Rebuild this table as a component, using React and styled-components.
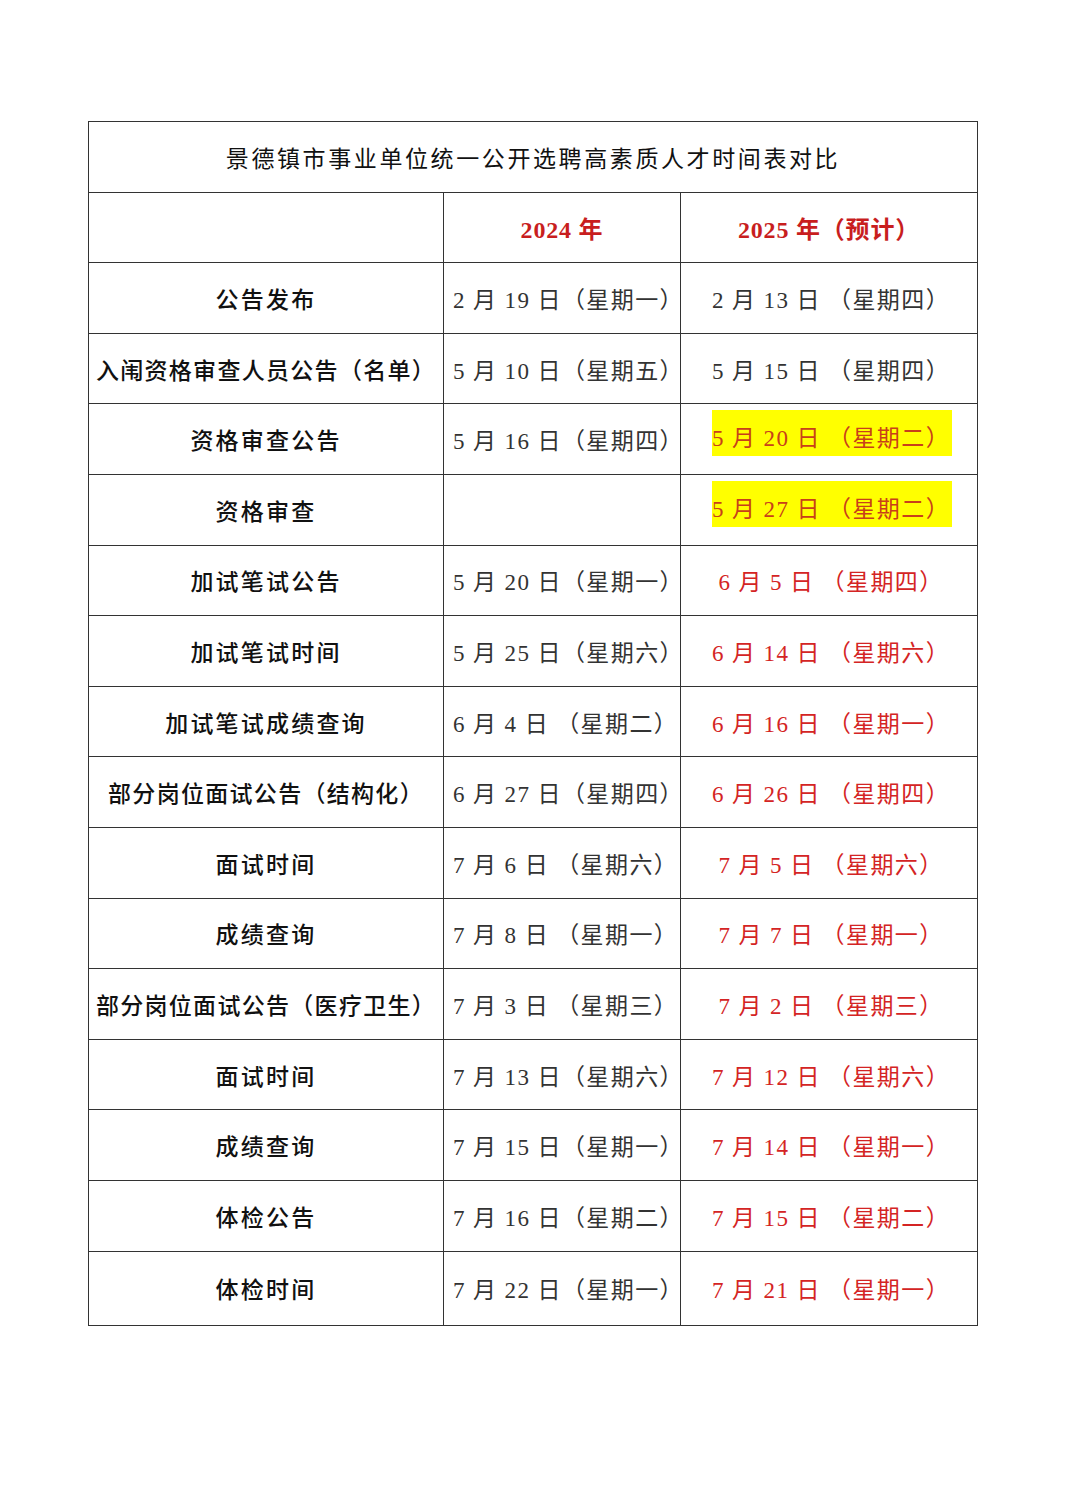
import { createGlobalStyle, styled } from "styled-components";

const GlobalStyle = createGlobalStyle`
  html, body {
    margin: 0;
    padding: 0;
    background: #ffffff;
  }
  body {
    font-family: "Liberation Serif", "Noto Sans CJK SC", serif;
  }
`;

const rows = [
  { label: "公告发布", y2024: "2 月 19 日（星期一）", y2025: "2 月 13 日 （星期四）", red: false },
  { label: "入闱资格审查人员公告（名单）", y2024: "5 月 10 日（星期五）", y2025: "5 月 15 日 （星期四）", red: false },
  { label: "资格审查公告", y2024: "5 月 16 日（星期四）", y2025: "5 月 20 日 （星期二）", mark: true },
  { label: "资格审查", y2024: "", y2025: "5 月 27 日 （星期二）", mark: true },
  { label: "加试笔试公告", y2024: "5 月 20 日（星期一）", y2025: "6 月 5 日 （星期四）", red: true },
  { label: "加试笔试时间", y2024: "5 月 25 日（星期六）", y2025: "6 月 14 日 （星期六）", red: true },
  { label: "加试笔试成绩查询", y2024: "6 月 4 日 （星期二）", y2025: "6 月 16 日 （星期一）", red: true },
  { label: "部分岗位面试公告（结构化）", y2024: "6 月 27 日（星期四）", y2025: "6 月 26 日 （星期四）", red: true },
  { label: "面试时间", y2024: "7 月 6 日 （星期六）", y2025: "7 月 5 日 （星期六）", red: true },
  { label: "成绩查询", y2024: "7 月 8 日 （星期一）", y2025: "7 月 7 日 （星期一）", red: true },
  { label: "部分岗位面试公告（医疗卫生）", y2024: "7 月 3 日 （星期三）", y2025: "7 月 2 日 （星期三）", red: true },
  { label: "面试时间", y2024: "7 月 13 日（星期六）", y2025: "7 月 12 日 （星期六）", red: true },
  { label: "成绩查询", y2024: "7 月 15 日（星期一）", y2025: "7 月 14 日 （星期一）", red: true },
  { label: "体检公告", y2024: "7 月 16 日（星期二）", y2025: "7 月 15 日 （星期二）", red: true },
  { label: "体检时间", y2024: "7 月 22 日（星期一）", y2025: "7 月 21 日 （星期一）", red: true },
];

export default function App() {
  return (
    <>
      <GlobalStyle />
      <Page>
        <Table>
          <colgroup>
            <col style={{ width: 355 }} />
            <col style={{ width: 237 }} />
            <col style={{ width: 297 }} />
          </colgroup>
          <tbody>
            <Row>
              <TitleCell colSpan={3}>景德镇市事业单位统一公开选聘高素质人才时间表对比</TitleCell>
            </Row>
            <Row>
              <Cell />
              <HeadCell>2024 年</HeadCell>
              <HeadCell>2025 年（预计）</HeadCell>
            </Row>
            {rows.map((r, i) => (
              <Row key={i} $last={i === rows.length - 1}>
                <LabelCell $tight={r.label.length > 12}>{r.label}</LabelCell>
                <DateCell>{r.y2024}</DateCell>
                <DateCell $center>
                  {r.mark ? <Mark>{r.y2025}</Mark> : <DateText $red={r.red}>{r.y2025}</DateText>}
                </DateCell>
              </Row>
            ))}
          </tbody>
        </Table>
      </Page>
    </>
  );
}

const Page = styled.div`
  padding: 121px 0 160px 88px;
`;

const Table = styled.table`
  border-collapse: collapse;
  table-layout: fixed;
  width: 890px;
  border: 1px solid #333;
`;

const Row = styled.tr`
  height: ${(p) => (p.$last ? "74px" : "70.6px")};
`;

const Cell = styled.td`
  border: 1px solid #333;
  padding: 0;
  text-align: center;
  vertical-align: middle;
  white-space: nowrap;
`;

const TitleCell = styled(Cell)`
  font-family: "Noto Sans CJK SC", sans-serif;
  font-size: 23px;
  letter-spacing: 2.6px;
  color: #111;
`;

const HeadCell = styled(Cell)`
  font-size: 24px;
  font-weight: 700;
  color: #c81e1e;
  letter-spacing: 0.8px;
`;

const LabelCell = styled(Cell)`
  font-family: "Noto Sans CJK SC", sans-serif;
  font-weight: 500;
  font-size: 23px;
  letter-spacing: ${(p) => (p.$tight ? "1.3px" : "2.2px")};
  color: #111;
`;

const DateCell = styled(Cell)`
  text-align: ${(p) => (p.$center ? "center" : "left")};
  padding: ${(p) => (p.$center ? "0 0 0 4px" : "0 0 0 9px")};
  font-size: 23px;
  letter-spacing: 1.4px;
  color: #333;
  font-weight: 400;
`;

const DateText = styled.span`
  color: ${(p) => (p.$red ? "#d42424" : "#333")};
`;

const Mark = styled.span`
  display: inline-block;
  background: #ffff00;
  color: #c8401a;
  line-height: 30px;
  padding: 14px 2px 2px 0;
  margin-right: -2px;
  margin-bottom: 12px;
`;
